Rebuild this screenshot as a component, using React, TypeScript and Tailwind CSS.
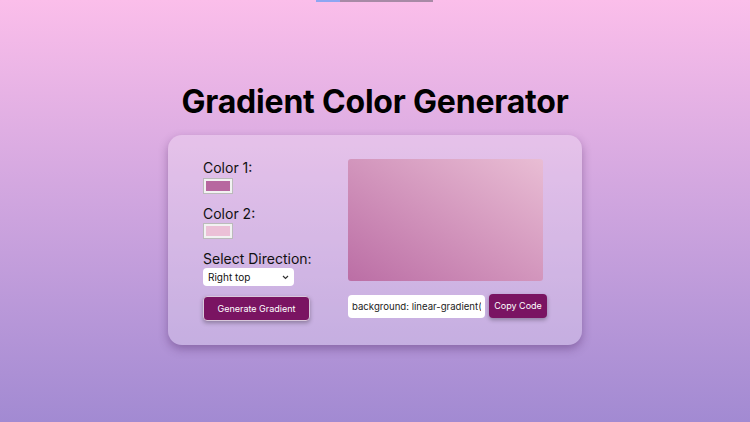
import React, { useState } from "react";

export default function App() {
  const [color1] = useState("#b7679f");
  const [color2] = useState("#ecc0d7");
  const [direction] = useState("Right top");

  const font = { fontFamily: "Inter, 'Open Sans', sans-serif" };
  const code = `background: linear-gradient(to right top, ${color1}, ${color2});`;

  return (
    <div
      className="relative min-h-screen h-[422px] w-full bg-gradient-to-b from-[#fbbeea] to-[#a28ad2] flex flex-col items-center overflow-hidden"
      style={font}
    >
      {/* thin bar on top */}
      <div className="absolute top-0 left-[316px] flex h-[2px] w-[117px]">
        <div className="w-[24px] bg-[#8ea6f2]" />
        <div className="flex-1 bg-[#a88aa6]" />
      </div>

      <h1 className="mt-[82px] text-[32px] leading-[40px] font-bold tracking-[-0.2px] text-black">
        Gradient Color Generator
      </h1>

      <div className="mt-[13px] w-[414px] h-[210px] rounded-[14px] bg-white/25 shadow-[0_4px_10px_rgba(60,20,80,0.35)] flex pl-[35px] pt-6">
        {/* left column */}
        <div className="w-[145px] flex flex-col">
          <label className="text-[14px] leading-[16px] text-[#111] mt-[1px]">Color 1:</label>
          <div className="mt-[2px] w-[30px] h-[16px] border border-[#bbb] bg-[#f2f2f2] p-[2px]">
            <div className="w-full h-full" style={{ backgroundColor: color1 }} />
          </div>

          <label className="mt-[12px] text-[14px] leading-[16px] text-[#111]">Color 2:</label>
          <div className="mt-[1px] w-[30px] h-[16px] border border-[#bbb] bg-[#f2f2f2] p-[2px]">
            <div className="w-full h-full" style={{ backgroundColor: color2 }} />
          </div>

          <label className="mt-[12px] text-[14px] leading-[16px] text-[#111]">Select Direction:</label>
          <div className="mt-[1px] w-[91px] h-[18px] bg-white rounded-[4px] flex items-center justify-between px-[5px]">
            <span className="text-[10px] text-[#111]">{direction}</span>
            <svg width="7" height="5" viewBox="0 0 7 5" fill="none">
              <path d="M1 1l2.5 2.5L6 1" stroke="#333" strokeWidth="1.2" />
            </svg>
          </div>

          <button className="mt-[10px] w-[107px] h-[25px] rounded-[4px] bg-[#7a1462] border border-[#d9c8dc] text-white text-[9px] shadow-[0_2px_4px_rgba(0,0,0,0.3)]">
            Generate Gradient
          </button>
        </div>

        {/* right column */}
        <div className="flex flex-col">
          <div className="w-[195px] h-[122px] rounded-[3px] bg-gradient-to-tr from-[#bb6ea5] to-[#e9bdd4]" />
          <div className="mt-[13px] flex items-center gap-[4px]">
            <input
              readOnly
              value={code}
              className="w-[137px] h-[23px] bg-white rounded-[4px] px-[4px] text-[9.6px] text-[#222] outline-none"
              style={font}
            />
            <button className="w-[58px] h-[24px] rounded-[4px] bg-[#7a1462] text-white text-[9px] whitespace-nowrap shadow-[0_2px_4px_rgba(0,0,0,0.3)]">
              Copy Code
            </button>
          </div>
        </div>
      </div>
    </div>
  );
}
